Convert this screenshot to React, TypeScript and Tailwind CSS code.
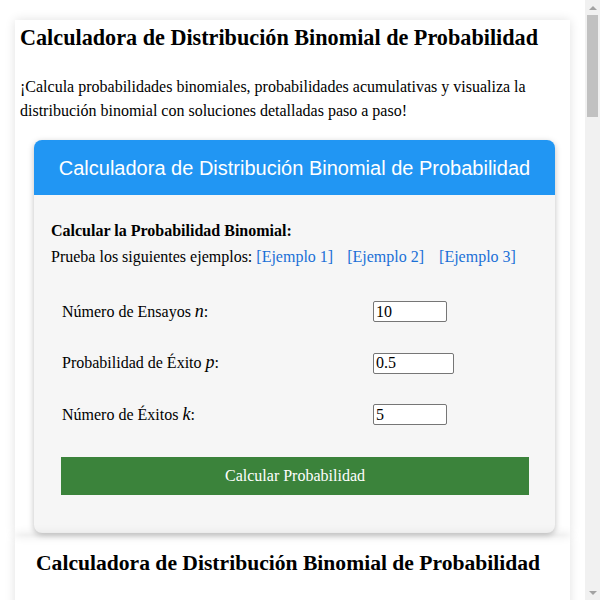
import React from "react";

const serif = { fontFamily: '"Liberation Serif", "Times New Roman", serif' };

function MathVar({ v }: { v: string }) {
  return <span className="italic text-[18px] leading-none">{v}</span>;
}

function Row({ label, v, value, w }: { label: string; v: string; value: string; w: string }) {
  return (
    <div className="flex items-center h-[51.5px]">
      <div className="w-[311px] text-[16px] text-black">
        {label} <MathVar v={v} />:
      </div>
      <input
        readOnly
        value={value}
        className={`${w} h-[21px] border border-[#767676] rounded-[2px] bg-white px-[2px] text-[16px] text-black outline-none`}
        style={serif}
      />
    </div>
  );
}

function Scrollbar() {
  return (
    <div className="w-[15px] h-[600px] bg-[#f1f1f1] flex flex-col items-center shrink-0">
      <div className="h-[15px] w-full flex items-center justify-center">
        <div className="w-0 h-0 border-l-[4px] border-r-[4px] border-b-[4px] border-l-transparent border-r-transparent border-b-[#a3a3a3]" />
      </div>
      <div className="w-[11px] h-[102px] bg-[#c1c1c1]" />
      <div className="flex-1" />
      <div className="h-[15px] w-full flex items-center justify-center">
        <div className="w-0 h-0 border-l-[4px] border-r-[4px] border-t-[4px] border-l-transparent border-r-transparent border-t-[#a3a3a3]" />
      </div>
    </div>
  );
}

export default function App() {
  return (
    <div className="flex h-[600px] overflow-hidden bg-white">
      <div className="w-[585px] shrink-0 pt-5 text-black" style={serif}>
        <div className="w-[555px] mx-auto px-[5px] pb-[2px] shadow-[0_0_10px_rgba(0,0,0,0.12)]">
          <h1 className="text-[22.2px] font-bold leading-[36px] whitespace-nowrap">
            Calculadora de Distribución Binomial de Probabilidad
          </h1>
          <p className="text-[16px] leading-[24px] mt-[19px]">
            ¡Calcula probabilidades binomiales, probabilidades acumulativas y visualiza la distribución binomial con
            soluciones detalladas paso a paso!
          </p>
          <div className="ml-[14px] mr-[10px] mt-[17px] rounded-[8px] bg-[#f6f6f6] shadow-[0_2px_6px_rgba(0,0,0,0.25)] overflow-hidden">
            <div className="bg-[#2196f3] h-[55px] flex items-center justify-center">
              <span className="text-white text-[20px]" style={{ fontFamily: '"Liberation Sans", Arial, sans-serif' }}>
                Calculadora de Distribución Binomial de Probabilidad
              </span>
            </div>
            <div className="px-[17px] pt-[24px] pb-[38px]">
              <div className="font-bold text-[16px] leading-[24px]">Calcular la Probabilidad Binomial:</div>
              <div className="text-[16px] leading-[24px] mt-[2px] whitespace-nowrap">
                Prueba los siguientes ejemplos:{" "}
                <span className="text-[#1a70d6]">[Ejemplo 1]</span>
                <span className="ml-[14px] text-[#1a70d6]">[Ejemplo 2]</span>
                <span className="ml-[15px] text-[#1a70d6]">[Ejemplo 3]</span>
              </div>
              <div className="pl-[11px] mt-[17px]">
                <Row label="Número de Ensayos" v="n" value="10" w="w-[74px]" />
                <Row label="Probabilidad de Éxito" v="p" value="0.5" w="w-[81px]" />
                <Row label="Número de Éxitos" v="k" value="5" w="w-[74px]" />
              </div>
              <div className="pl-[10px] pr-[9px] mt-[16.5px]">
                <div className="bg-[#3b833b] h-[38px] flex items-center justify-center text-white text-[16px]">
                  Calcular Probabilidad
                </div>
              </div>
            </div>
          </div>
        </div>
        <div className="w-[555px] mx-auto px-[21px] pt-[13px] pb-[40px] shadow-[0_0_10px_rgba(0,0,0,0.12)]">
          <h2 className="text-[21.6px] font-bold leading-[30px] whitespace-nowrap">
            Calculadora de Distribución Binomial de Probabilidad
          </h2>
          <div className="h-[300px]" />
        </div>
      </div>
      <Scrollbar />
    </div>
  );
}
